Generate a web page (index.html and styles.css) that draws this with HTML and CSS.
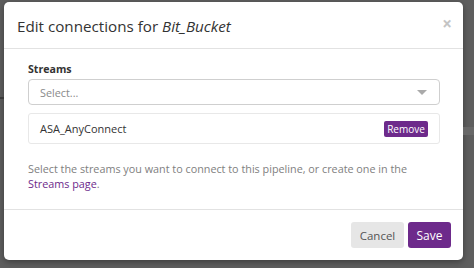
FILE: index.html
```html
<!DOCTYPE html>
<html>
<head>
<meta charset="utf-8">
<link rel="stylesheet" href="styles.css">
</head>
<body>
<div class="backdrop">
  <div class="bg-line-left"></div>
  <div class="bg-band-right"></div>
  <div class="modal">
    <div class="modal-header">
      <h4 class="modal-title">Edit connections for <em>Bit_Bucket</em></h4>
      <span class="close">&times;</span>
    </div>
    <div class="modal-body">
      <label class="field-label">Streams</label>
      <div class="select">
        <span class="placeholder">Select...</span>
        <span class="caret"></span>
      </div>
      <div class="stream-item">
        <span class="stream-name">ASA_AnyConnect</span>
        <button class="btn-remove">Remove</button>
      </div>
      <p class="help">Select the streams you want to connect to this pipeline, or create one in the <a class="link">Streams page</a>.</p>
    </div>
    <div class="modal-footer">
      <button class="btn btn-cancel">Cancel</button>
      <button class="btn btn-save">Save</button>
    </div>
  </div>
</div>
</body>
</html>
```
FILE: styles.css
```css
html, body {
  margin: 0;
  padding: 0;
  width: 474px;
  height: 268px;
  overflow: hidden;
  background: #5e5e5e;
  font-family: "Open Sans", "Liberation Sans", sans-serif;
}
.backdrop {
  position: relative;
  width: 474px;
  height: 268px;
  padding: 2px 0 0 4px;
  box-sizing: border-box;
}
.bg-line-left {
  position: absolute;
  left: 0;
  top: 97px;
  width: 4px;
  height: 2px;
  background: #3a3a3a;
}
.bg-band-right {
  position: absolute;
  right: 0;
  top: 127px;
  width: 11px;
  height: 8px;
  background: #686868;
}
.modal {
  width: 459px;
  height: 258px;
  background: #fff;
  border-radius: 5px;
  box-shadow: 0 2px 6px rgba(0,0,0,0.35);
  display: flex;
  flex-direction: column;
  box-sizing: border-box;
}
.modal-header {
  height: 47px;
  box-sizing: border-box;
  border-bottom: 1px solid #e2e2e2;
  padding: 0 13px;
  display: flex;
  align-items: center;
  justify-content: space-between;
}
.modal-title {
  margin: 0;
  font-size: 15.2px;
  font-weight: normal;
  color: #333;
  line-height: 20px;
  padding-top: 2px;
}
.modal-title em {
  font-style: italic;
}
.close {
  color: #c4c4c4;
  font-size: 17px;
  font-weight: bold;
  line-height: 1;
  margin-right: -2px;
  margin-top: -4px;
}
.modal-body {
  flex: 1;
  padding: 12px 23px 0 24px;
  border-bottom: 1px solid #e2e2e2;
}
.field-label {
  display: block;
  font-size: 10.6px;
  font-weight: bold;
  color: #333;
  line-height: 16px;
  margin-bottom: 2px;
}
.select {
  height: 26px;
  box-sizing: border-box;
  border: 1px solid #cfcfcf;
  border-radius: 4px;
  display: flex;
  align-items: center;
  justify-content: space-between;
  padding: 0 12px 0 11px;
}
.placeholder {
  font-size: 10.8px;
  color: #8a8a8a;
}
.caret {
  width: 0;
  height: 0;
  border-left: 5px solid transparent;
  border-right: 5px solid transparent;
  border-top: 5px solid #aaa;
}
.stream-item {
  margin-top: 8px;
  height: 31px;
  box-sizing: border-box;
  border: 1px solid #e8e8e8;
  border-radius: 3px;
  display: flex;
  align-items: center;
  justify-content: space-between;
  padding: 0 11px 0 11px;
}
.stream-name {
  font-size: 11px;
  color: #333;
}
.btn-remove {
  border: none;
  background: #6d2a8b;
  color: #fff;
  font-family: inherit;
  font-size: 10px;
  height: 16px;
  width: 44px;
  padding: 0;
  border-radius: 2px;
  line-height: 16px;
  margin-top: 1px;
}
.help {
  margin: 17px 0 0 0;
  font-size: 10.8px;
  line-height: 15px;
  color: #808080;
}
.link {
  color: #6d2a8b;
}
.modal-footer {
  height: 50px;
  box-sizing: border-box;
  padding: 0 12px 0 0;
  display: flex;
  align-items: center;
  justify-content: flex-end;
  gap: 4px;
}
.btn {
  border: none;
  height: 26px;
  font-family: inherit;
  font-size: 12px;
  border-radius: 3px;
  padding: 0;
}
.btn-cancel {
  width: 53px;
  background: #e6e6e6;
  color: #555;
  font-size: 11.5px;
}
.btn-save {
  width: 43px;
  background: #6d2a8b;
  color: #fff;
}
```
